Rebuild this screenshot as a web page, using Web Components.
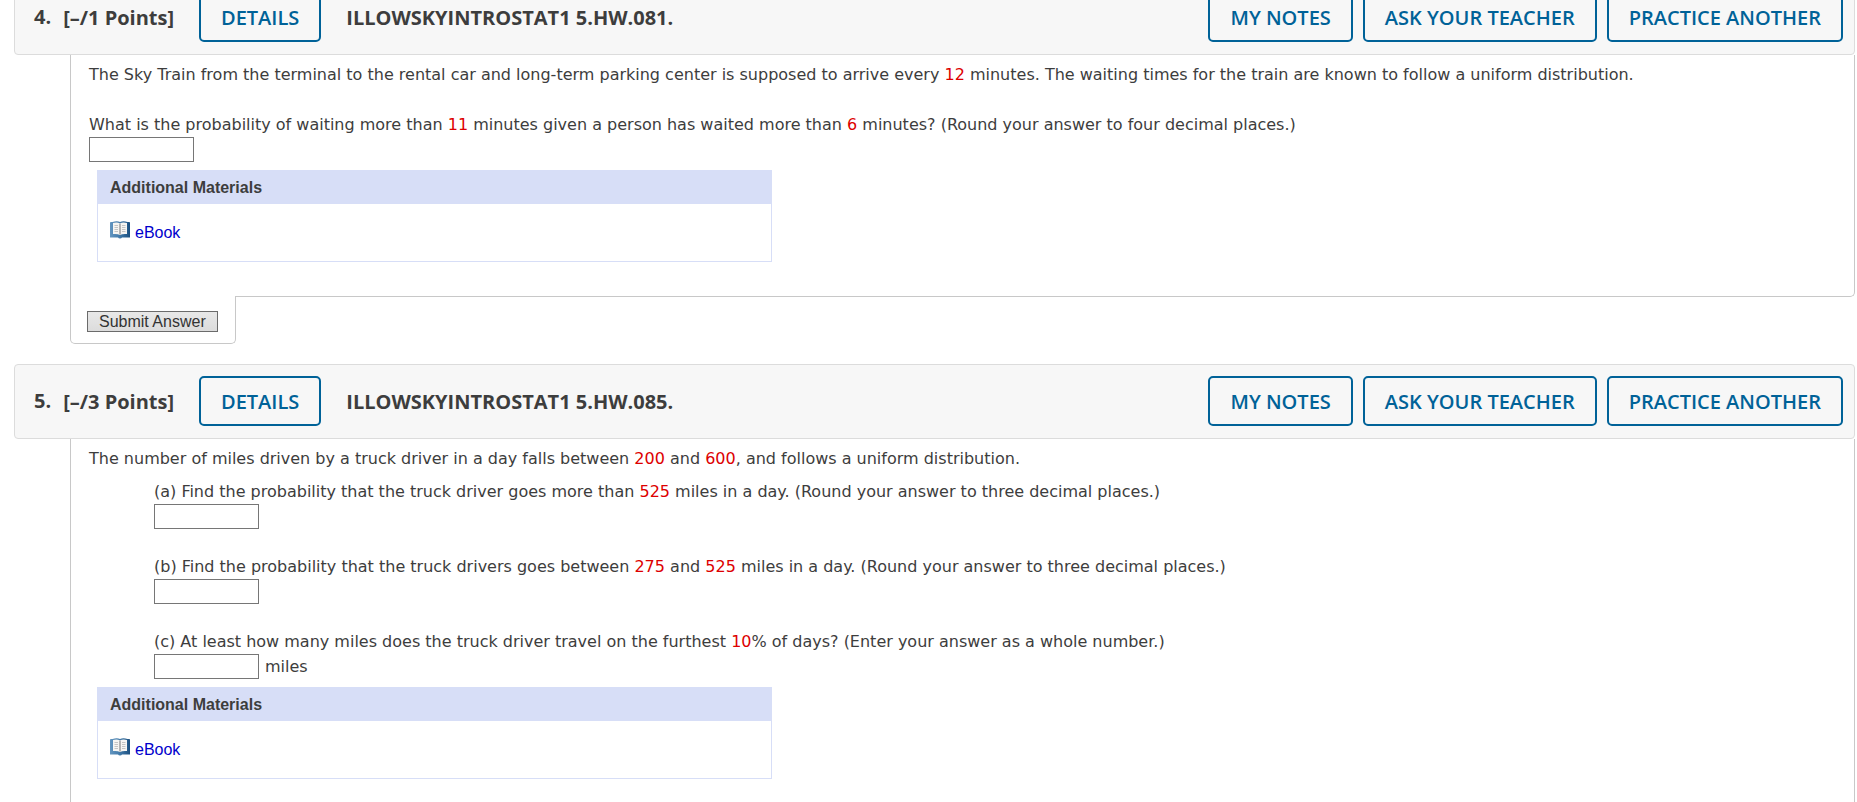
<!DOCTYPE html>
<html lang="en">
<head>
<meta charset="utf-8">
<title>Homework</title>
<style>
  body { margin: 0; background: #fff; color: #3d3d3d; }
</style>
</head>
<body>

<homework-page>
  <question-card number="4." points="[–/1 Points]" code="ILLOWSKYINTROSTAT1 5.HW.081." submit="Submit Answer">
    <p>The Sky Train from the terminal to the rental car and long-term parking center is supposed to arrive every <random-value>12</random-value> minutes. The waiting times for the train are known to follow a uniform distribution.</p>
    <answer-field class="lone">What is the probability of waiting more than <random-value>11</random-value> minutes given a person has waited more than <random-value>6</random-value> minutes? (Round your answer to four decimal places.)</answer-field>
  </question-card>
  <question-card number="5." points="[–/3 Points]" code="ILLOWSKYINTROSTAT1 5.HW.085.">
    <p>The number of miles driven by a truck driver in a day falls between <random-value>200</random-value> and <random-value>600</random-value>, and follows a uniform distribution.</p>
    <answer-parts>
      <answer-field>(a) Find the probability that the truck driver goes more than <random-value>525</random-value> miles in a day. (Round your answer to three decimal places.)</answer-field>
      <answer-field>(b) Find the probability that the truck drivers goes between <random-value>275</random-value> and <random-value>525</random-value> miles in a day. (Round your answer to three decimal places.)</answer-field>
      <answer-field unit="miles">(c) At least how many miles does the truck driver travel on the furthest <random-value>10</random-value>% of days? (Enter your answer as a whole number.)</answer-field>
    </answer-parts>
  </question-card>
</homework-page>

<script>
class Base extends HTMLElement {
  constructor() {
    super();
    this.attachShadow({ mode: 'open' });
  }
  connectedCallback() {
    const t = document.createElement('template');
    t.innerHTML = this.markup();
    this.shadowRoot.replaceChildren(t.content.cloneNode(true));
  }
  attr(name) { return this.getAttribute(name) || ''; }
}

customElements.define('homework-page', class extends Base {
  markup() {
    return `<style>
      :host { display: block; height: 100vh; overflow-y: auto; scrollbar-width: none; }
      main { display: flex; flex-direction: column; gap: 20px; margin: -20px 2px 0 14px; }
    </style><main><slot></slot></main>`;
  }
});

customElements.define('random-value', class extends Base {
  markup() {
    return `<style>:host { color: #dd0000; }</style><slot></slot>`;
  }
});

customElements.define('outline-button', class extends Base {
  markup() {
    return `<style>
      :host { display: block; }
      button { display: block; box-sizing: border-box; height: 50px; margin: 0; padding: 2px 20px 0;
        border: 2px solid #006298; border-radius: 5px; background: transparent; color: #006298;
        font: 600 20px/24px "Open Sans", sans-serif; white-space: nowrap; cursor: pointer; }
    </style><button type="button"><slot></slot></button>`;
  }
});

customElements.define('question-header', class extends Base {
  markup() {
    return `<style>
      :host { display: flex; align-items: center; box-sizing: border-box; height: 75px;
        padding: 0 11px 1px 19px; border: 1px solid #dcdcdc; border-radius: 4px; background: #f7f7f7;
        font: 700 20px/26px "Open Sans", sans-serif; white-space: nowrap; }
      .label { display: flex; gap: 12px; width: 165px; }
      h2 { margin: 0 0 0 25px; padding-top: 2px; font-size: inherit; }
      .points { padding-top: 1px; }
      .actions { display: flex; gap: 10px; margin-left: auto; }
    </style>
    <div class="label"><span>${this.attr('number')}</span><span class="points">${this.attr('points')}</span></div>
    <outline-button>DETAILS</outline-button>
    <h2>${this.attr('code')}</h2>
    <div class="actions">
      <outline-button>MY NOTES</outline-button>
      <outline-button>ASK YOUR TEACHER</outline-button>
      <outline-button>PRACTICE ANOTHER</outline-button>
    </div>`;
  }
});

customElements.define('answer-parts', class extends Base {
  markup() {
    return `<style>
      :host { display: flex; flex-direction: column; gap: 25px; margin: 8px 0 0 65px; }
    </style><slot></slot>`;
  }
});

customElements.define('answer-field', class extends Base {
  markup() {
    return `<style>
      :host { display: block; }
      :host(.lone) { margin-top: 25px; }
      label { display: block; }
      .row { display: flex; gap: 6px; }
      input { box-sizing: border-box; width: 105px; height: 25px; margin: 0; padding: 1px 4px;
        border: 1px solid #767676; border-radius: 0; background: #fff; color: inherit; font: inherit; }
    </style>
    <label for="answer"><slot></slot></label>
    <div class="row"><input id="answer" type="text">${this.attr('unit') ? `<span>${this.attr('unit')}</span>` : ''}</div>`;
  }
});

customElements.define('book-icon', class extends Base {
  markup() {
    return `<style>:host { display: block; width: 20px; height: 18px; } svg { display: block; }</style>
    <svg width="20" height="18" viewBox="0 0 20 18" aria-hidden="true">
      <defs>
        <linearGradient id="cover" x1="0" y1="0" x2="1" y2="0">
          <stop offset="0" stop-color="#6496c0"/><stop offset=".5" stop-color="#3f78a8"/><stop offset="1" stop-color="#1c5080"/>
        </linearGradient>
      </defs>
      <path d="M0 1.500Q0 1 1 1h1.500Q7-.6 10 1q3-1.600 7.500 0h1.500q1 0 1 .5V16.500h-8q-.5 1-2 1t-2-1H0z" fill="url(#cover)"/>
      <path d="M3 2Q7.500 .8 10 2.600q2.500-1.800 7-.6V13q-4.500-.5-7 1-2.500-1.500-7-1z" fill="#f6f5f2"/>
      <path d="M9 2.500l1 .5 1-.5V13l-1 1-1-1z" fill="#b4b4b4"/>
      <path d="M4.500 4.500h3.500M4.500 6.500h3.500M4.500 8.500h3.500M4.500 10.500h3.500M12 4.500h3.500M12 6.500h3.500M12 8.500h3.500M12 10.500h3.500" fill="none" stroke="#c4c4c4" stroke-width="1"/>
    </svg>`;
  }
});

customElements.define('additional-materials', class extends Base {
  markup() {
    return `<style>
      :host { display: block; box-sizing: border-box; max-width: 675px; margin: 8px 8px 0;
        border: 1px solid #d7def7; font: 16px/20px "Liberation Sans", Arial, sans-serif; }
      h3 { margin: 0; padding: 7px 12px 6px; background: #d7def7; font-size: 16px; font-weight: 700; }
      .items { display: flex; padding: 17px 12px 18px; }
      a { display: flex; gap: 5px; color: #0000cc; text-decoration: none; }
      a span { padding-top: 2px; }
    </style>
    <h3>Additional Materials</h3>
    <div class="items"><a href="#ebook"><book-icon></book-icon><span>eBook</span></a></div>`;
  }
});

customElements.define('question-card', class extends Base {
  markup() {
    const submit = this.attr('submit');
    return `<style>
      :host { display: block; font: 16px/25px "DejaVu Sans", Verdana, sans-serif; }
      ::slotted(p) { margin: 0; }
      .body { margin-left: 56px; padding: 7px 18px 34px; border: 1px solid #c8c8c8; border-top: 0;
        border-bottom-right-radius: 5px; }
      .submit { box-sizing: border-box; width: fit-content; margin: -1px 0 0 56px; padding: 15px 17px 11px 16px;
        border: 1px solid #c8c8c8; border-top: 0; border-radius: 0 0 5px 5px; background: #fff; }
      .submit button { display: block; box-sizing: border-box; height: 21px; margin: 0; padding: 0 11px;
        border: 1px solid #6b6b6b; border-radius: 0; background: linear-gradient(#e8e8e8, #dcdcdc);
        color: #333; font: 16px/19px "Liberation Sans", Arial, sans-serif; }
    </style>
    <question-header number="${this.attr('number')}" points="${this.attr('points')}" code="${this.attr('code')}"></question-header>
    <div class="body"><slot></slot><additional-materials></additional-materials></div>
    ${submit ? `<div class="submit"><button type="button">${submit}</button></div>` : ''}`;
  }
});
</script>
</body>
</html>
